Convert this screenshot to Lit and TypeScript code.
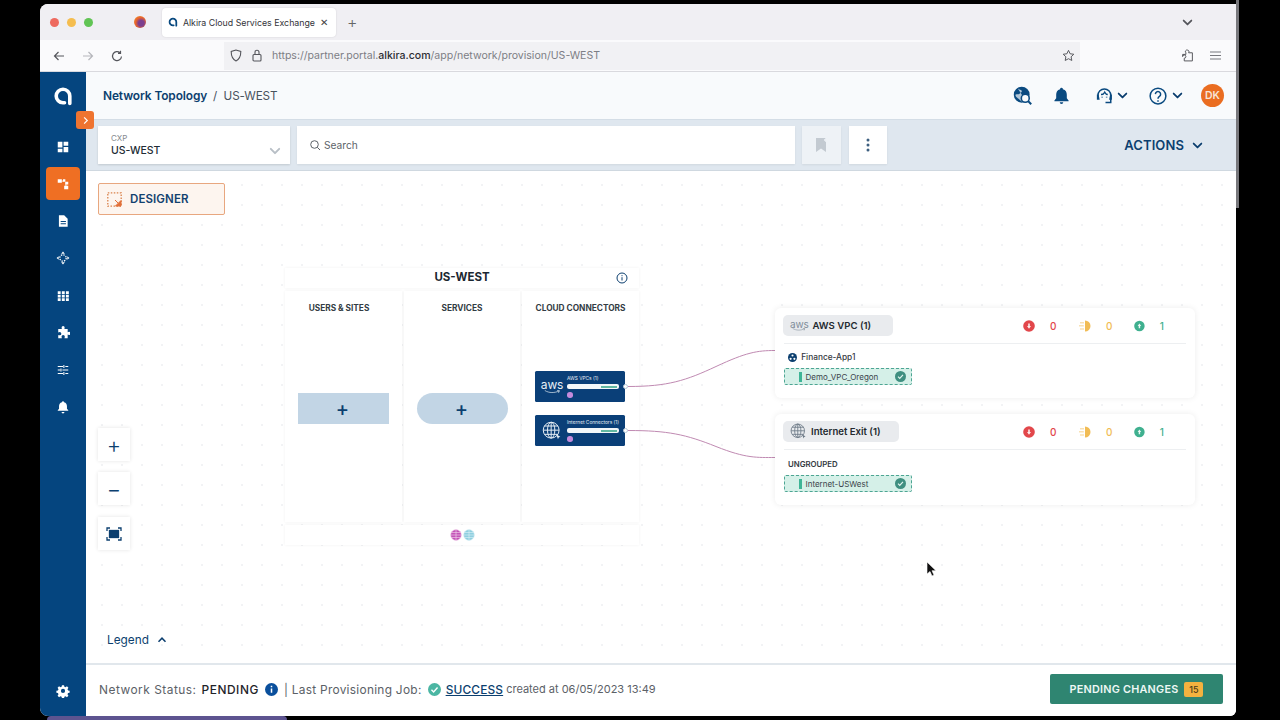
import { LitElement, html, css, svg } from "lit";
import { customElement } from "lit/decorators.js";

const chev = (c = "#0a3d6e", s = 10) => html`<svg width=${s} height=${s} viewBox="0 0 10 10" fill="none" stroke=${c} stroke-width="1.6" stroke-linecap="round" stroke-linejoin="round"><path d="M1.5 3.2 5 6.8l3.5-3.6"/></svg>`;
const logo = (c: string, s: number) => html`<svg width=${s} height=${s} viewBox="0 0 20 20" fill="none" stroke=${c} stroke-width="3.600" stroke-linecap="round"><path d="M16.800 17.500V10a6.800 6.800 0 1 0-6.800 6.800h1.500"/></svg>`;
const globe = (c: string, s: number) => html`<svg width=${s} height=${s} viewBox="0 0 24 24" fill="none" stroke=${c} stroke-width="1.2"><circle cx="11" cy="11" r="9.5"/><ellipse cx="11" cy="11" rx="4.4" ry="9.5"/><path d="M11 1.5v19M1.5 11h19M3 6h16M3 16h16"/><path d="m17 16 5 3-2 .8-.8 2.2z" fill=${c} stroke="none"/></svg>`;
const aws = (c: string, fs: number) => html`<span class="aws" style="color:${c};font-size:${fs}px">aws<svg viewBox="0 0 30 6" fill="none" stroke=${c} stroke-width="1.2" stroke-linecap="round"><path d="M2 1c7 4.5 17 4.5 25 .5M24 .8l3.4.4-1.2 3"/></svg></span>`;
const check = (s: number) => html`<svg width=${s} height=${s} viewBox="0 0 16 16"><circle cx="8" cy="8" r="8" fill="#3f8f80"/><path d="m4.4 8.2 2.5 2.5 4.7-5" fill="none" stroke="#e6f6f1" stroke-width="1.7"/></svg>`;

const sideIcons = [
  svg`<path d="M3 3h8v10H3zM13 3h8v7h-8zM13 12h8v9h-8zM3 15h8v6H3z" fill="#fff"/>`,
  svg`<path d="M3 4h7v6H3zM12 4h4v4h-4zM16 8h5v5h-5zM14 15h7v6h-7z" fill="#fff"/><path d="M10 7h3M17 9v7" stroke="#fff" stroke-width="1.4"/>`,
  svg`<path fill-rule="evenodd" d="M5 2h9l6 6v14H5zM8 12v1.6h9V12zm0 4v1.6h9V16z" fill="#fff"/>`,
  svg`<path d="m12 1 3.2 3.6H8.800zM12 23l-3.200-3.600h6.400zM1 12l3.600-3.200v6.400zM23 12l-3.600 3.200V8.800z" fill="#fff"/><circle cx="12" cy="12" r="5.500" fill="none" stroke="#fff" stroke-width="2.200" stroke-dasharray="2.500 1.800"/>`,
  svg`<path d="M3 4h5v4.500H3zM10 4h5v4.500h-5zM17 4h5v4.500h-5zM3 10h5v4.500H3zM10 10h5v4.500h-5zM17 10h5v4.500h-5zM3 16h5v4.500H3zM10 16h5v4.500h-5zM17 16h5v4.500h-5z" fill="#fff"/>`,
  svg`<path d="M9 3a2.800 2.800 0 0 1 5.600 0c0 1-.6 1.600-.6 2.500h6v5.600c.9 0 1.500-.6 2.500-.6a2.800 2.800 0 0 1 0 5.600c-1 0-1.600-.6-2.500-.6V22h-5.800c0-1 .7-1.500.7-2.600a3 3 0 0 0-6 0c0 1.100.7 1.600.7 2.600H3v-5.800c1 0 1.500.7 2.600.7a3 3 0 0 0 0-6C4.500 10.900 4 11.600 3 11.600V5.500h6.600C9.600 4.600 9 4 9 3z" fill="#fff" transform="translate(1 0) scale(.95)"/>`,
  svg`<path d="M3 6h9M16 6h5M3 12h4M11 12h10M3 18h9M16 18h5M13.500 3.500v5M8.500 9.500v5M13.500 15.500v5" stroke="#fff" stroke-width="1.800" fill="none"/>`,
  svg`<path d="M12 2a1.800 1.800 0 0 1 1.800 1.800c3.500.8 5 3.500 5 7v4l2.200 2.700v1H3v-1l2.200-2.700v-4c0-3.500 1.500-6.200 5-7A1.800 1.800 0 0 1 12 2zM9.500 20.500h5a2.500 2.500 0 0 1-5 0z" fill="#fff"/>`,
];

@customElement("app-root")
export class AppRoot extends LitElement {
  static styles = css`
    :host { display: block; width: 1280px; height: 720px; background: #000; position: relative; overflow: hidden; font-family: "Inter", "Liberation Sans", sans-serif; }
    * { box-sizing: border-box; }
    .window { position: absolute; left: 40px; top: 4px; width: 1196px; height: 712px; background: #fff; border-radius: 8px 0 6px 8px; overflow: hidden; display: flex; flex-direction: column; }
    .edge { position: absolute; left: 1236px; top: 0; width: 3px; height: 208px; background: #77777b; }
    .strip { position: absolute; left: 47px; top: 716px; width: 240px; height: 4px; background: #5d5490; border-radius: 4px 4px 0 0; }

    .tabs { height: 36px; background: #f0eff3; display: flex; align-items: center; flex: none; }
    .lights { display: flex; gap: 8px; margin-left: 10px; width: 84px; }
    .lights i { width: 9px; height: 9px; border-radius: 50%; }
    .fox { width: 12px; height: 12px; border-radius: 50%; background: radial-gradient(circle at 60% 60%, #7c3f8f 0 28%, #e8632c 55%, #f2a32f); margin-right: 16px; }
    .tab { width: 174px; height: 29px; background: #fff; border-radius: 4px; display: flex; align-items: center; padding-left: 6px; gap: 5px; font-size: 8.800px; color: #33343a; box-shadow: 0 0 2px #0002; white-space: nowrap; }
    .tab .x { margin-left: auto; margin-right: 8px; font-size: 10px; color: #444; }
    .plus { margin-left: 11px; font-size: 16px; color: #666; font-weight: 300; }
    .tabchev { margin-left: auto; margin-right: 43px; display: flex; }

    .toolbar { height: 32px; background: #fafafc; border-bottom: 1px solid #d9d9de; display: flex; align-items: center; flex: none; }
    .nav { width: 184px; display: flex; align-items: center; gap: 17px; padding-left: 13px; color: #55565c; }
    .url { width: 856px; height: 28px; background: #f1f1f4; display: flex; align-items: center; padding-left: 6px; gap: 10px; font-size: 10.550px; color: #7d7e85; }
    .url b { color: #2d2e33; font-weight: 500; }
    .url .star { margin-left: auto; margin-right: 5px; display: flex; }
    .tools { display: flex; align-items: center; gap: 16px; margin-left: 101px; }

    .app { flex: 1; display: flex; min-height: 0; }
    .side { width: 46px; background: #05457f; display: flex; flex-direction: column; align-items: center; flex: none; position: relative; padding-top: 14px; }
    .toggle { position: absolute; left: 36px; top: 39px; width: 18px; height: 18px; background: #ef7430; border-radius: 3px; color: #fff; display: flex; align-items: center; justify-content: center; z-index: 3; }
    .menu { margin-top: 22px; display: flex; flex-direction: column; align-items: center; gap: 0; }
    .menu div { width: 34px; height: 37.300px; display: flex; align-items: center; justify-content: center; border-radius: 4px; }
    .menu div.on { background: #ef6f23; height: 33px; margin: 2px 0; }
    .gear { margin-top: auto; margin-bottom: 18px; display: flex; }

    .content { flex: 1; min-width: 0; display: flex; flex-direction: column; }
    .head { height: 48px; background: #f8fafc; border-bottom: 1px solid #d4dde6; display: flex; align-items: center; padding: 0 12px 0 17px; flex: none; }
    .crumb { font-size: 11.900px; font-weight: 600; color: #0c3f6f; letter-spacing: -.1px; }
    .crumb span { font-weight: 400; font-size: 11.700px; color: #48535e; margin-left: 3px; }
    .hicons { margin-left: auto; display: flex; align-items: center; }
    .avatar { width: 23px; height: 23px; border-radius: 50%; background: #ea6d21; color: #f7e4d6; font-size: 10.500px; font-weight: 600; display: flex; align-items: center; justify-content: center; margin-left: 18px; }

    .bar { height: 51px; background: #dfe7ef; border-bottom: 1px solid #cfd8e0; display: flex; align-items: center; padding: 0 33px 0 12px; flex: none; }
    .select { width: 192px; height: 38px; background: #fff; box-shadow: 0 1px 2px #0002; padding: 6px 13px; position: relative; display: flex; flex-direction: column; justify-content: center; }
    .select small { font-size: 8px; color: #85898e; line-height: 9px; }
    .select strong { font-size: 10.500px; font-weight: 500; color: #222c35; line-height: 13px; margin-top: 1px; }
    .select svg { position: absolute; right: 9px; top: 19px; }
    .search { width: 498px; height: 38px; background: #fff; margin-left: 7px; display: flex; align-items: center; padding-left: 12px; gap: 3px; font-size: 10.200px; color: #5d6369; box-shadow: 0 1px 2px #0001; }
    .sq { width: 39px; height: 38px; background: #eef2f6; display: flex; align-items: center; justify-content: center; margin-left: 7px; box-shadow: 0 1px 2px #0001; }
    .sq.w { background: #fff; width: 38px; margin-left: 8px; }
    .actions { margin-left: auto; display: flex; align-items: center; gap: 8px; font-size: 13px; font-weight: 600; color: #0c3f6f; letter-spacing: .1px; }

    .canvas { flex: 1; min-height: 0; position: relative; padding: 12px; background-color: #fff; background-image: radial-gradient(circle, #f2f3f5 1px, transparent 1.300px); background-size: 20px 20px; background-position: 6px 4px; }
    .designer { width: 127px; height: 32px; background: #fdf5ef; border: 1px solid #e8a77f; border-radius: 2px; display: flex; align-items: center; gap: 8px; padding-left: 8px; font-size: 11.500px; font-weight: 600; color: #12426f; letter-spacing: .1px; }
    .lines { position: absolute; left: 0; top: 0; width: 100%; height: 100%; pointer-events: none; }

    .zoom { position: absolute; left: 12px; width: 32px; height: 33px; background: #fff; box-shadow: 0 0 4px #0000001c; display: flex; align-items: center; justify-content: center; font-size: 22px; font-weight: 300; color: #0c3f6f; line-height: 1; }
    .legend { position: absolute; left: 21px; top: 457px; display: flex; align-items: center; gap: 8px; font-size: 11.800px; color: #0c3f6f; height: 24px; }

    .panel { position: absolute; left: 199px; top: 97px; width: 354px; height: 277px; display: grid; grid-template-rows: 20px 231px 20px; gap: 3px; }
    .ptitle { background: #fff; box-shadow: 0 0 3px #0000000f; display: flex; align-items: center; justify-content: center; position: relative; font-size: 11.500px; font-weight: 700; color: #1b2731; padding-bottom: 2px; }
    .ptitle svg { position: absolute; right: 11px; top: 4px; }
    .cols { display: grid; grid-template-columns: 117px 116px 117px; gap: 2px; }
    .col { background: #fff; box-shadow: 0 0 3px #0000000f; display: flex; flex-direction: column; align-items: center; position: relative; padding-top: 12px; font-size: 8.300px; font-weight: 700; color: #333c44; }
    .col.first { padding-right: 9px; }
    .add { position: absolute; top: 102px; height: 31px; width: 91px; background: #c2d5e5; color: #0c3f6f; font-size: 20px; font-weight: 500; display: flex; align-items: center; justify-content: center; padding-right: 2px; }
    .add.round { border-radius: 16px; left: 13px; }
    .add.rect { left: 13px; }
    .pfoot { background: #fff; box-shadow: 0 0 3px #0000000f; display: flex; align-items: center; justify-content: center; gap: 1px; }
    .pfoot svg { display: block; }

    .node { position: absolute; left: 13px; width: 90px; height: 31px; background: #0a3f78; border-radius: 1.500px; color: #e6eef5; }
    .node .ic { position: absolute; left: 6px; top: 5px; width: 22px; height: 22px; display: flex; align-items: center; justify-content: center; }
    .node .t { position: absolute; left: 32px; top: 4px; font-size: 4.800px; font-weight: 400; white-space: nowrap; line-height: 6px; }
    .node .b { position: absolute; left: 32px; top: 13px; width: 52px; height: 5px; background: #f3f7f9; border-radius: 2px; }
    .node .b i { position: absolute; right: 2px; top: 1.500px; width: 16px; height: 2px; background: #62b8a2; }
    .node .d { position: absolute; left: 32px; top: 21px; width: 5.500px; height: 5.500px; border-radius: 50%; background: #c58bdc; }
    .node .p { position: absolute; right: -3px; top: 13px; width: 5px; height: 5px; border-radius: 50%; background: #fff; border: 1px solid #b7c9d8; }
    .aws { display: inline-flex; flex-direction: column; align-items: center; font-weight: 400; line-height: .8; letter-spacing: -.2px; }
    .aws svg { width: 1.400em; height: .3em; display: block; }

    .card { position: absolute; left: 689px; width: 420px; background: #fff; border-radius: 6px; box-shadow: 0 0 6px #00000014; padding: 7px 9px 5px 8px; }
    .chead { display: flex; align-items: center; height: 21px; }
    .pill { height: 21px; background: #e9ebee; border-radius: 5px; display: flex; align-items: center; gap: 4px; padding-left: 7px; font-size: 9.600px; font-weight: 600; color: #23292f; }
    .stats { margin-left: auto; display: flex; align-items: center; margin-right: 22px; font-size: 10px; font-weight: 500; }
    .stats span { display: flex; align-items: center; }
    .sep { height: 1px; background: #edeff1; margin: 7px 0 0 1px; }
    .glabel { display: flex; align-items: center; gap: 2px; font-size: 8.300px; color: #33393f; font-weight: 500; margin: 7px 0 0 5px; height: 12px; }
    .chip { margin: 5px 0 0 1px; width: 128px; height: 17px; background: #d5f0e8; border: 1px dashed #4da593; border-radius: 2px; display: flex; align-items: center; padding: 0 5px 0 14px; font-size: 8px; color: #3b444b; gap: 3px; position: relative; }
    .chip::before { content: ""; width: 2.500px; height: 10px; background: #3eb596; margin-right: 1px; }
    .chip svg { margin-left: auto; }

    .foot { height: 53px; background: #fff; border-top: 2px solid #e1e7ec; display: flex; align-items: center; padding: 0 13px 3px; font-size: 11.900px; color: #5b6167; flex: none; white-space: nowrap; }
    .foot .s1 { letter-spacing: .5px; }
    .foot .s2 { letter-spacing: .28px; margin-left: 0; }
    .foot .s3 { font-size: 11px; letter-spacing: 0; }
    .foot b { font-weight: 500; color: #1f2429; margin-left: 5px; letter-spacing: .55px; }
    .foot .ii { margin: 0 6px 0 6px; display: flex; }
    .foot a { color: #0c3f6f; font-weight: 500; text-decoration: underline; margin: 0 3px 0 5px; letter-spacing: .15px; }
    .foot .ck { margin-left: 6px; display: flex; }
    .pending { margin-left: auto; width: 173px; height: 30px; background: #2f8571; border-radius: 2px; color: #eef8f5; display: flex; align-items: center; justify-content: center; gap: 6px; font-size: 10.800px; font-weight: 600; letter-spacing: .25px; }
    .pending i { font-style: normal; width: 19px; height: 15px; background: #f4b23f; border-radius: 2px; color: #4a3c1a; font-size: 9px; font-weight: 500; display: flex; align-items: center; justify-content: center; letter-spacing: 0; }
    .mr { display: flex; }
  `;

  stat(c: string, dir: string, val: string, w: number) {
    const icon = dir === "half"
      ? html`<svg width="12" height="12" viewBox="0 0 12 12"><path d="M6 .5a5.500 5.500 0 0 1 0 11z" fill=${c}/><path d="M1 2h4v1.500H1zM0 5h4.800v1.500H0zM1 8.300h4v1.500H1z" fill=${c} opacity=".45"/></svg>`
      : html`<svg width="12" height="12" viewBox="0 0 12 12"><circle cx="6" cy="6" r="5.800" fill=${c}/><path d=${dir === "up" ? "M6 3.200 8 6H6.800v2.500H5.200V6H4z" : "M6 8.800 4 6h1.200V3.500h1.600V6H8z"} fill="#fff" opacity=".9"/></svg>`;
    return html`<span style="width:${w}px">${icon}<span style="margin-left:15px;color:${c}">${val}</span></span>`;
  }

  card(top: number, height: number, title: string, icon: unknown, group: unknown, chip: string, pillw: number) {
    return html`<div class="card" style="top:${top}px;height:${height}px">
      <div class="chead">
        <div class="pill" style="width:${pillw}px">${icon}<span>${title}</span></div>
        <div class="stats">
          ${this.stat("#e2474b", "down", "0", 56)}
          ${this.stat("#f1bc55", "half", "0", 55)}
          ${this.stat("#3fb08f", "up", "1", 30)}
        </div>
      </div>
      <div class="sep"></div>
      ${group}
      <div class="chip">${chip}${check(11)}</div>
    </div>`;
  }

  render() {
    const I = (p: unknown, s = 12) => html`<svg width=${s} height=${s} viewBox="0 0 24 24">${p}</svg>`;
    return html`
      <div class="edge"></div><div class="strip"></div>
      <div class="window">
        <div class="tabs">
          <div class="lights"><i style="background:#ee6a5f"></i><i style="background:#f5bd4f"></i><i style="background:#61c454"></i></div>
          <div class="fox"></div>
          <div class="tab">${logo("#0a4a80", 12)}<span>Alkira Cloud Services Exchange</span><span class="x">✕</span></div>
          <span class="plus">+</span>
          <span class="tabchev">${chev("#55565c", 11)}</span>
        </div>
        <div class="toolbar">
          <div class="nav">
            <svg width="12" height="12" viewBox="0 0 12 12" fill="none" stroke="#55565c" stroke-width="1.200"><path d="M11 6H1.500M5.500 2 1.500 6l4 4"/></svg>
            <svg width="12" height="12" viewBox="0 0 12 12" fill="none" stroke="#b5b6bb" stroke-width="1.200"><path d="M1 6h9.500M6.500 2l4 4-4 4"/></svg>
            <svg width="12" height="12" viewBox="0 0 12 12" fill="none" stroke="#55565c" stroke-width="1.200"><path d="M10.500 6.500A4.500 4.500 0 1 1 9 2.700M9.500 .8v2.500H7"/></svg>
          </div>
          <div class="url">
            <svg width="12" height="13" viewBox="0 0 12 13" fill="none" stroke="#55565c" stroke-width="1.100"><path d="M6 1 1.200 2.500c0 4 .8 7.500 4.800 9.500 4-2 4.800-5.500 4.800-9.500z"/></svg>
            <svg width="10" height="13" viewBox="0 0 10 13" fill="none" stroke="#55565c" stroke-width="1.100"><rect x="1" y="5.500" width="8" height="6.500" rx="1"/><path d="M3 5.500V3.200a2 2 0 0 1 4 0v2.300"/></svg>
            <span>https://partner.portal.<b>alkira.com</b>/app/network/provision/US-WEST</span>
            <span class="star"><svg width="13" height="13" viewBox="0 0 24 24" fill="none" stroke="#55565c" stroke-width="1.800"><path d="m12 2.500 3 6.300 6.800.9-5 4.700 1.300 6.800-6.100-3.300-6.100 3.300 1.300-6.800-5-4.700 6.800-.9z"/></svg></span>
          </div>
          <div class="tools">
            <svg width="13" height="13" viewBox="0 0 24 24" fill="none" stroke="#55565c" stroke-width="1.800"><path d="M3 10h6V7a3 3 0 0 1 3-5 3 3 0 0 1 2 5h7v15H6v-5a3 3 0 1 0-3-3z"/></svg>
            <svg width="11" height="9" viewBox="0 0 11 9" stroke="#77787e" stroke-width="1.100"><path d="M0 1h11M0 4.500h11M0 8h11"/></svg>
          </div>
        </div>
        <div class="app">
          <div class="side">
            ${logo("#fff", 20)}
            <div class="toggle"><svg width="9" height="9" viewBox="0 0 10 10" fill="none" stroke="#fff" stroke-width="1.300"><path d="m3.500 1.500 3.500 3.500-3.500 3.500"/></svg></div>
            <div class="menu">
              ${sideIcons.map((p, i) => html`<div class=${i === 1 ? "on" : ""}>${I(p, 14)}</div>`)}
            </div>
            <div class="gear"><svg width="14" height="14" viewBox="0 0 24 24"><path fill="#fff" fill-rule="evenodd" d="M10 1.500h4l.6 3 2.300 1 2.600-1.700 2.800 2.800-1.700 2.600 1 2.300 3 .6v4l-3 .6-1 2.300 1.700 2.600-2.800 2.800-2.600-1.700-2.300 1-.6 3h-4l-.6-3-2.300-1-2.600 1.700-2.800-2.800 1.700-2.600-1-2.300-3-.6v-4l3-.6 1-2.300L1.700 6.600l2.800-2.800 2.600 1.700 2.300-1zM12 8.500a4 4 0 1 0 0 8 4 4 0 0 0 0-8z" transform="translate(1.200 .6) scale(.9)"/></svg></div>
          </div>
          <div class="content">
            <div class="head">
              <div class="crumb">Network Topology <span>/&nbsp; US-WEST</span></div>
              <div class="hicons">
                <svg width="19" height="19" viewBox="0 0 24 24"><circle cx="11" cy="11" r="10" fill="#0a4a80"/><path d="M6 3c2 2 4 1 5 3s-2 3-3 4-3 0-5 1c0 3 3 4 6 7l4 3 4-2-4-5z" fill="#e9f0f6" opacity=".75"/><circle cx="15.500" cy="15.500" r="5" fill="#f8fafc" stroke="#0a4a80" stroke-width="2"/><path d="m19 19 4 4" stroke="#0a4a80" stroke-width="2.500"/></svg>
                <svg style="margin-left:21px" width="17" height="17" viewBox="0 0 24 24"><path d="M12 1a2 2 0 0 1 2 2c4 1 5.500 4 5.500 8v5l2.500 3v1H2v-1l2.500-3v-5c0-4 1.500-7 5.500-8a2 2 0 0 1 2-2zM9.500 21.500h5a2.500 2.500 0 0 1-5 0z" fill="#0a4a80"/></svg>
                <svg style="margin-left:24.500px" width="18" height="18" viewBox="0 0 24 24" fill="none" stroke="#0a4a80" stroke-width="2"><path d="M4 15V11a8.500 8.500 0 0 1 17 0v9.500h-7"/><path d="M4 11h-.5v5H5zM21 11h.5v5H20z" fill="#0a4a80"/><path d="M8 10c2 0 4-1 5-3 1 2 2 3 4 3"/><path d="M9.500 13v1M15.500 13v1"/></svg>
                <span class="mr" style="margin-left:4.500px">${chev("#0a3d6e", 11)}</span>
                <svg style="margin-left:20.500px" width="18" height="18" viewBox="0 0 24 24" fill="none" stroke="#0a4a80" stroke-width="2"><circle cx="12" cy="12" r="10.500"/><path d="M8.500 9.500a3.500 3.500 0 1 1 5.500 3c-1.500 1-2 1.600-2 3"/><path d="M12 17.500v2"/></svg>
                <span class="mr" style="margin-left:5.500px">${chev("#0a3d6e", 11)}</span>
                <div class="avatar">DK</div>
              </div>
            </div>
            <div class="bar">
              <div class="select"><small>CXP</small><strong>US-WEST</strong>${chev("#b8bfc6", 12)}</div>
              <div class="search">
                <svg width="12" height="12" viewBox="0 0 12 12" fill="none" stroke="#5d6369" stroke-width="1"><circle cx="5.500" cy="5.500" r="3.800"/><path d="m8.300 8.300 2.700 2.700"/></svg>
                Search
              </div>
              <div class="sq"><svg width="14" height="16" viewBox="0 0 14 16"><path d="M1 1h10v14L6 11.500 1 15z" fill="#c3cad1"/><path d="M11 1v4M9 3h4" stroke="#eef2f6" stroke-width="1.500"/></svg></div>
              <div class="sq w"><svg width="4" height="14" viewBox="0 0 4 14" fill="#3d5f80"><circle cx="2" cy="2" r="1.500"/><circle cx="2" cy="7" r="1.500"/><circle cx="2" cy="12" r="1.500"/></svg></div>
              <div class="actions">ACTIONS ${chev("#0c3f6f", 11)}</div>
            </div>
            <div class="canvas">
              <div class="designer">
                <svg width="15" height="15" viewBox="0 0 15 15" fill="none"><rect x=".8" y=".8" width="13.400" height="13.400" stroke="#d9824c" stroke-width="1.300" stroke-dasharray="1.500 1.500"/><path d="M8 8h6v6H8z" fill="#fbf1ea"/><path d="M14 8.500V14H8.500zM8 8l3 3" fill="#e2703a" stroke="#e2703a"/></svg>
                DESIGNER
              </div>
              <div class="zoom" style="top:257px">+</div>
              <div class="zoom" style="top:301px">−</div>
              <div class="zoom" style="top:346px"><svg width="16" height="14" viewBox="0 0 16 14" fill="none" stroke="#0c3f6f" stroke-width="1.300"><path d="M1 4V1h3M12 1h3v3M15 10v3h-3M4 13H1v-3"/><rect x="3.500" y="3.500" width="9" height="7" fill="#0c3f6f"/></svg></div>
              <div class="legend">Legend <svg width="10" height="10" viewBox="0 0 10 10" fill="none" stroke="#0c3f6f" stroke-width="1.500"><path d="M1.500 6.800 5 3.200l3.500 3.600"/></svg></div>

              <div class="panel">
                <div class="ptitle">US-WEST<svg width="12" height="12" viewBox="0 0 12 12" fill="none" stroke="#0c3f6f" stroke-width="1"><circle cx="6" cy="6" r="5"/><path d="M6 5.200v3.300M6 3.200v1"/></svg></div>
                <div class="cols">
                  <div class="col first">USERS &amp; SITES<div class="add rect">+</div></div>
                  <div class="col">SERVICES<div class="add round">+</div></div>
                  <div class="col">CLOUD CONNECTORS
                    <div class="node" style="top:80px"><div class="ic">${aws("#e6eef5", 12)}</div><div class="t">AWS VPCs (1)</div><div class="b"><i></i></div><div class="d"></div><div class="p"></div></div>
                    <div class="node" style="top:124px"><div class="ic">${globe("#e6eef5", 20)}</div><div class="t">Internet Connectors (1)</div><div class="b"><i></i></div><div class="d"></div><div class="p"></div></div>
                  </div>
                </div>
                <div class="pfoot">
                  <svg width="12" height="12" viewBox="0 0 12 12" fill="#c454b8" stroke="#f3d6ef" stroke-width=".6"><circle cx="6" cy="6" r="5.400"/><path d="M.6 6h10.800M1.500 3.500h9M1.500 8.500h9M6 .6v10.800" fill="none"/></svg>
                  <svg width="12" height="12" viewBox="0 0 12 12" fill="#8fcfe0" stroke="#dff2f7" stroke-width=".6"><circle cx="6" cy="6" r="5.400"/><path d="M.6 6h10.800M1.500 3.500h9M1.500 8.500h9M6 .6v10.800" fill="none"/></svg>
                </div>
              </div>

              <svg class="lines" viewBox="0 0 1150 491" fill="none" stroke="#c08ab2" stroke-width="1">
                <path d="M542 215c40 0 58-6 88-20s41-16 59-16"/>
                <path d="M542 259c40 0 58 4 88 16s41 11 59 11"/>
              </svg>

              ${this.card(137, 90, "AWS VPC (1)", aws("#7f8d9a", 10), html`<div class="glabel"><svg width="9" height="9" viewBox="0 0 10 10"><circle cx="5" cy="5" r="5" fill="#0c3f6f"/><circle cx="5" cy="2.800" r="1.200" fill="#fff"/><circle cx="2.900" cy="6.500" r="1.200" fill="#fff"/><circle cx="7.100" cy="6.500" r="1.200" fill="#fff"/></svg>&nbsp;Finance-App1</div>`, "Demo_VPC_Oregon", 110)}
              ${this.card(243, 91, "Internet Exit (1)", globe("#6b7885", 17), html`<div class="glabel" style="font-weight:600;font-size:7.800px;margin-top:8px">UNGROUPED</div>`, "Internet-USWest", 116)}
            </div>
            <div class="foot">
              <span class="s1">Network Status:</span> <b>PENDING</b>
              <span class="ii"><svg width="13" height="13" viewBox="0 0 12 12"><circle cx="6" cy="6" r="6" fill="#0a4f9c"/><path d="M6 5v4M6 2.600v1.300" stroke="#fff" stroke-width="1.400"/></svg></span>
              <span class="s2">| Last Provisioning Job:</span>
              <span class="ck"><svg width="13" height="13" viewBox="0 0 12 12"><circle cx="6" cy="6" r="6" fill="#4bb6a3"/><path d="m3.200 6.200 2 2 3.600-4" fill="none" stroke="#fff" stroke-width="1.300"/></svg></span>
              <a>SUCCESS</a> <span class="s3">created at 06/05/2023 13:49</span>
              <div class="pending">PENDING CHANGES <i>15</i></div>
            </div>
          </div>
        </div>
      </div>
      <svg style="position:absolute;left:926px;top:562px" width="10" height="15" viewBox="0 0 10 15"><path d="M1 0v12l3-2.500L6 14l2-1-2-4.300h4z" fill="#111" stroke="#fff" stroke-width=".6"/></svg>
    `;
  }
}
